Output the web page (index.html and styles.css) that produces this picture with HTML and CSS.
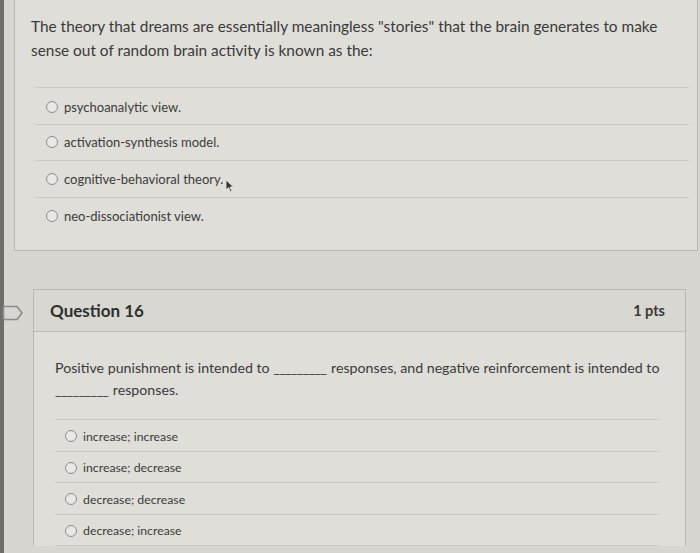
FILE: index.html
```html
<!DOCTYPE html>
<html lang="en">
<head>
<meta charset="utf-8">
<title>Quiz</title>
<link rel="stylesheet" href="styles.css">
</head>
<body>
<div class="screen">
  <div class="strip"></div>
  <div class="content">
    <section class="card q15">
      <p class="qtext">The theory that dreams are essentially meaningless "stories" that the brain generates to make sense out of random brain activity is known as the:</p>
      <ul class="answers">
        <li><span class="radio"></span>psychoanalytic view.</li>
        <li><span class="radio"></span>activation-synthesis model.</li>
        <li><span class="radio"></span>cognitive-behavioral theory.<svg class="cursor" width="10" height="14" viewBox="0 0 10 14"><path d="M1 1 L1 11 L3.5 8.5 L5.5 13 L7 12.3 L5 8 L8.5 8 Z" fill="#333" stroke="#eee" stroke-width="0.8"/></svg></li>
        <li><span class="radio"></span>neo-dissociationist view.</li>
      </ul>
    </section>
    <div class="q16row">
      <svg class="flag" width="22" height="16" viewBox="0 0 22 16"><path d="M1.5 1.5 H15 L20 8 L15 14.5 H1.5 Z" fill="none" stroke="#8d8c88" stroke-width="1.6" stroke-linejoin="round"/></svg>
      <section class="card q16">
        <header class="qhead">
          <h2>Question 16</h2>
          <span class="pts">1 pts</span>
        </header>
        <div class="qbody">
          <p class="qtext2">Positive punishment is intended to <span class="blank">_________</span> responses, and negative reinforcement is intended to <span class="blank">_________</span> responses.</p>
          <ul class="answers small">
            <li><span class="radio"></span>increase; increase</li>
            <li><span class="radio"></span>increase; decrease</li>
            <li><span class="radio"></span>decrease; decrease</li>
            <li><span class="radio"></span>decrease; increase</li>
          </ul>
        </div>
      </section>
    </div>
  </div>
</div>
</body>
</html>
```

FILE: styles.css
```css
* { box-sizing: border-box; }
html, body { margin: 0; padding: 0; }
body {
  background: #d7d6d0;
  font-family: Lato, "Open Sans", sans-serif;
  color: #3b3b3a;
  width: 700px;
  height: 553px;
  overflow: hidden;
}
.screen {
  display: flex;
  height: 553px;
}
.strip {
  width: 4px;
  background: #6e6d6a;
  flex: none;
}
.content {
  flex: 1;
  display: flex;
  flex-direction: column;
}
.card {
  background: #dfded9;
  border: 1px solid #b9b8b2;
}
.q15 {
  margin-left: 10px;
  margin-right: 2px;
  border-top: none;
  padding: 15px 8px 16px 16px;
}
.qtext {
  margin: 0;
  font-size: 15.4px;
  line-height: 23.5px;
  color: #3a3a39;
  padding-right: 20px;
}
.answers {
  list-style: none;
  margin: 0;
  padding: 0;
  margin-top: 25px;
  margin-left: 5px;
  border-top: 1px solid #c9c8c2;
}
.answers li {
  display: flex;
  align-items: center;
  height: 36.5px;
  border-bottom: 1px solid #c9c8c2;
  font-size: 13px;
  color: #3c3c3b;
  padding-left: 10px;
}
.answers li:first-child { padding-top: 2px; }
.answers li:last-child { border-bottom: none; }
.radio {
  width: 12px;
  height: 12px;
  border-radius: 50%;
  border: 1px solid #8e8d89;
  background: #e9e8e4;
  margin-right: 6px;
  flex: none;
}
.cursor { margin-left: 2px; margin-top: 14px; }
.q16row {
  display: flex;
  align-items: flex-start;
  margin-top: 38px;
}
.flag {
  margin-top: 16px;
  margin-left: -2px;
  flex: none;
}
.q16 {
  margin-left: 9px;
  width: 653px;
  border-bottom: none;
}
.qhead {
  display: flex;
  justify-content: space-between;
  align-items: center;
  height: 42px;
  padding: 0 20px 0 16px;
  background: #d8d7d1;
  border-bottom: 1px solid #bdbcb6;
}
.qhead h2 {
  margin: 0;
  font-size: 17px;
  font-weight: 700;
  color: #2f2f2e;
}
.pts {
  font-size: 14.5px;
  font-weight: 700;
  color: #3a3a39;
}
.qbody {
  padding: 25px 10px 0 21px;
}
.qtext2 {
  margin: 0;
  font-size: 14.2px;
  line-height: 22px;
  color: #3a3a39;
  padding-right: 0;
}
.blank { letter-spacing: -0.6px; margin-right: 1px; }
.answers.small {
  margin-top: 18px;
  margin-left: 0;
  margin-right: 16px;
}
.answers.small li {
  height: 31.5px;
  font-size: 12.3px;
  padding-left: 10px;
  padding-top: 2px;
  border-bottom: 1px solid #c9c8c2;
}
```
